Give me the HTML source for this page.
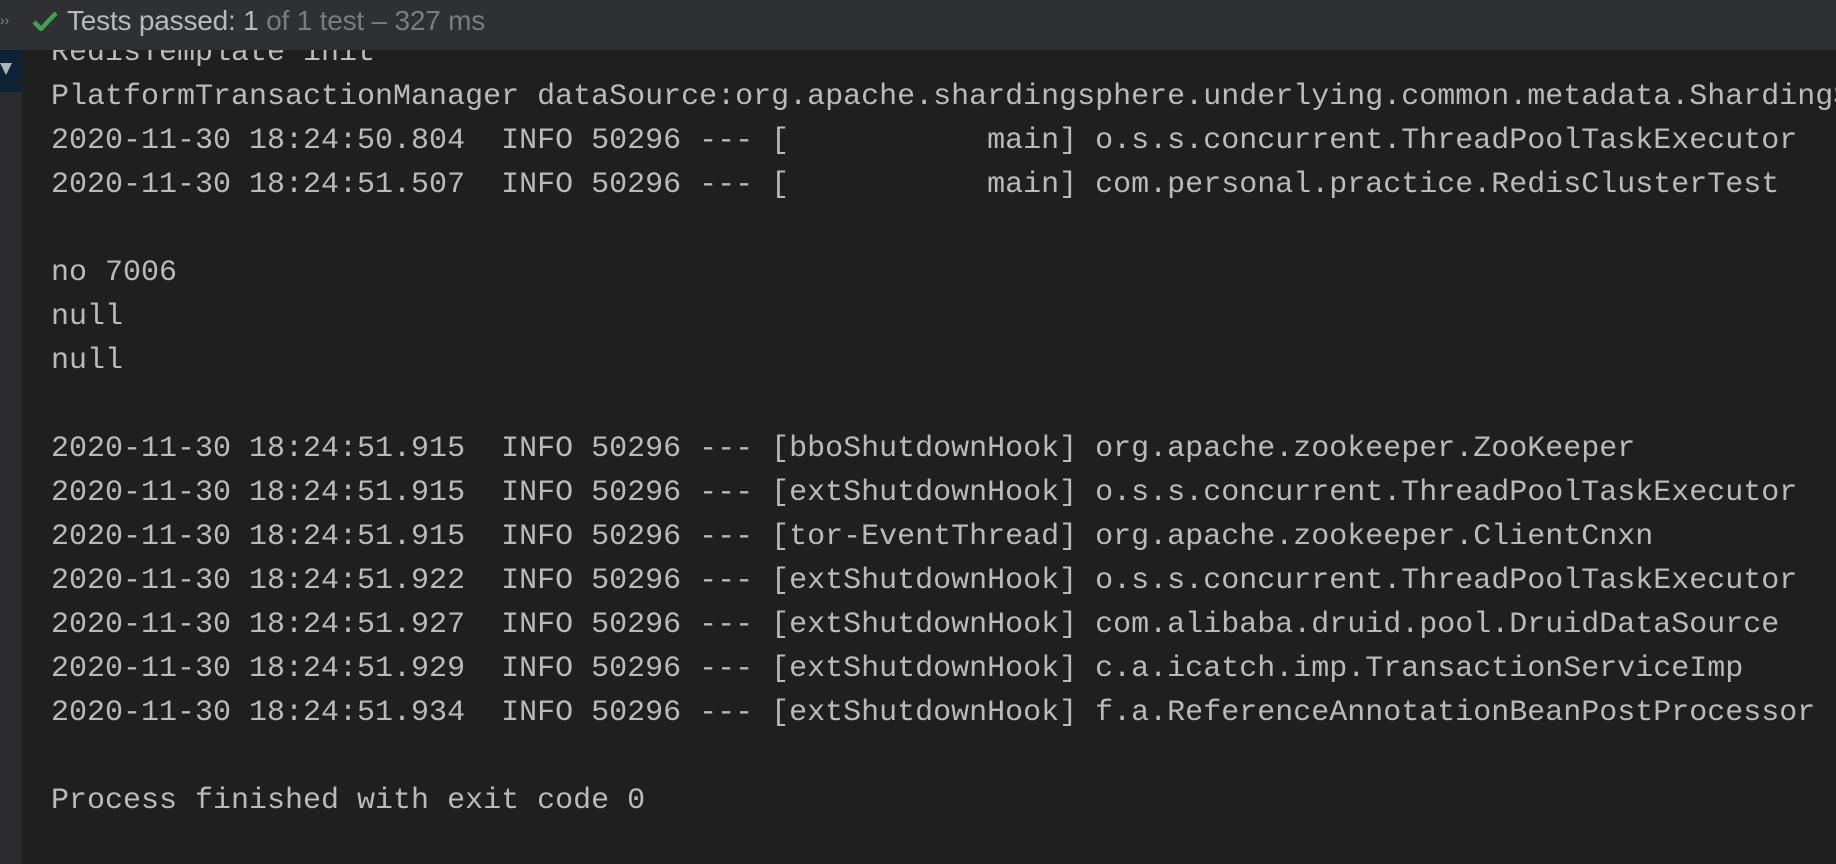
<!DOCTYPE html>
<html><head><meta charset="utf-8"><style>
html,body{margin:0;padding:0;width:1836px;height:864px;overflow:hidden;background:#1f1f1f}
#gut{position:absolute;left:0;top:0;width:22px;height:864px;background:#2b2b2d}
#sel{position:absolute;left:0;top:50px;width:22px;height:42px;background:#0e2235}
#tri{position:absolute;left:0;top:63px;width:0;height:0;border-left:6px solid transparent;border-right:6px solid transparent;border-top:12px solid #aeb4ba}
#hdr{position:absolute;left:0;top:0;width:1836px;height:50px;background:#2f3033;z-index:2;font-family:"Liberation Sans",sans-serif;font-size:28px;color:#b9b9b9;white-space:nowrap}
#hdr .t{position:absolute;left:67px;top:5px;letter-spacing:-0.2px}
#hdr .g{color:#7c7c7c}
#hdr .arr{position:absolute;left:0;top:12px;font-size:14px;color:#888}
#con{position:absolute;left:51px;top:31px;width:1785px;overflow:hidden;font-family:"Liberation Mono",monospace;font-size:30px;line-height:44px;color:#bababa;white-space:pre;z-index:1}
</style></head><body>
<div id="gut"></div><div id="sel"></div><div id="tri"></div>
<div id="hdr"><span class="arr">››</span>
<svg style="position:absolute;left:32px;top:11px" width="26" height="20" viewBox="0 0 26 20"><path d="M2 11 L9 18 L24 2" fill="none" stroke="#3fa34d" stroke-width="4.5" stroke-linejoin="miter"/></svg>
<span class="t">Tests passed: 1 <span class="g">of 1 test – 327 ms</span></span></div>
<div id="con">RedisTemplate init
PlatformTransactionManager dataSource:org.apache.shardingsphere.underlying.common.metadata.ShardingSphereDataSource
2020-11-30 18:24:50.804  INFO 50296 --- [           main] o.s.s.concurrent.ThreadPoolTaskExecutor
2020-11-30 18:24:51.507  INFO 50296 --- [           main] com.personal.practice.RedisClusterTest

no 7006
null
null

2020-11-30 18:24:51.915  INFO 50296 --- [bboShutdownHook] org.apache.zookeeper.ZooKeeper
2020-11-30 18:24:51.915  INFO 50296 --- [extShutdownHook] o.s.s.concurrent.ThreadPoolTaskExecutor
2020-11-30 18:24:51.915  INFO 50296 --- [tor-EventThread] org.apache.zookeeper.ClientCnxn
2020-11-30 18:24:51.922  INFO 50296 --- [extShutdownHook] o.s.s.concurrent.ThreadPoolTaskExecutor
2020-11-30 18:24:51.927  INFO 50296 --- [extShutdownHook] com.alibaba.druid.pool.DruidDataSource
2020-11-30 18:24:51.929  INFO 50296 --- [extShutdownHook] c.a.icatch.imp.TransactionServiceImp
2020-11-30 18:24:51.934  INFO 50296 --- [extShutdownHook] f.a.ReferenceAnnotationBeanPostProcessor

Process finished with exit code 0</div>
</body></html>
